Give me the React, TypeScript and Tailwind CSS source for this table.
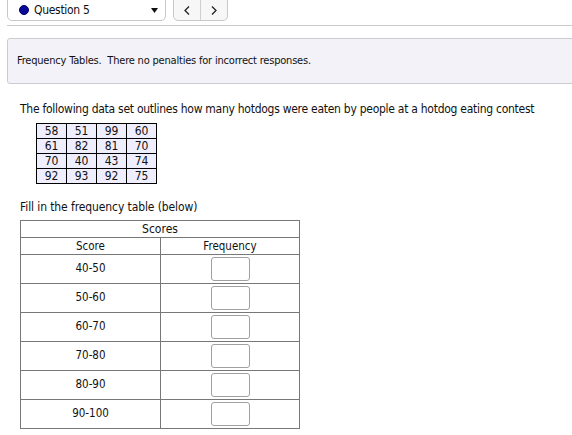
import React from "react";

const data = [
  [58, 51, 99, 60],
  [61, 82, 81, 70],
  [70, 40, 43, 74],
  [92, 93, 92, 75],
];
const ranges = ["40-50", "50-60", "60-70", "70-80", "80-90", "90-100"];

export default function App() {
  return (
    <div
      className="w-[572px] h-[435px] overflow-hidden bg-white text-[#222]"
      style={{ fontFamily: '"DejaVu Sans Condensed", "Liberation Sans", Arial, sans-serif' }}
    >
      {/* top bar */}
      <div className="flex items-start h-[22px]">
        <div className="ml-[7px] w-[159px] h-[22px] -mt-px border border-[#c8c8c8] rounded-b-[5px] flex items-center pl-[11px] pr-[7px]">
          <span className="w-[10px] h-[10px] rounded-full bg-[#0a0a9a] border border-[#000060]" />
          <span className="ml-[5px] text-[12px] tracking-[-0.3px] leading-none text-[#111]">Question 5</span>
          <svg className="ml-auto" width="7" height="5" viewBox="0 0 7 5">
            <path d="M0 0 L7 0 L3.5 5 Z" fill="#111" />
          </svg>
        </div>
        <div className="ml-[7px] w-[55px] h-[22px] -mt-px border border-[#c8c8c8] rounded-b-[5px] flex bg-[#f7f7f7]">
          <div className="w-[27px] h-full flex items-center justify-center border-r border-[#d0d0d0]">
            <svg width="6" height="9" viewBox="0 0 6 9">
              <path d="M5 0.5 L1 4.5 L5 8.5" fill="none" stroke="#222" strokeWidth="1.3" />
            </svg>
          </div>
          <div className="flex-1 h-full flex items-center justify-center">
            <svg width="6" height="9" viewBox="0 0 6 9">
              <path d="M1 0.5 L5 4.5 L1 8.5" fill="none" stroke="#222" strokeWidth="1.3" />
            </svg>
          </div>
        </div>
      </div>
      <div className="ml-[7px] mt-[3px] border-t border-[#cccccc]" />

      {/* info box */}
      <div className="ml-[7px] mr-[-10px] mt-[12px] h-[46px] border border-[#cccccc] rounded-[3px] bg-[#f2f2f8] flex items-center pl-[9px]">
        <span className="text-[11px] tracking-[-0.2px] text-[#111]">
          Frequency Tables.&nbsp; There no penalties for incorrect responses.
        </span>
      </div>

      {/* question */}
      <div className="ml-[20px] mt-[17px] text-[12px] tracking-[-0.27px] leading-[16px] text-[#111] whitespace-nowrap">
        The following data set outlines how many hotdogs were eaten by people at a hotdog eating contest
      </div>
      <table className="ml-[36px] mt-[6px] border-collapse border border-black bg-[#eeeeff] text-[12px] text-[#111]">
        <tbody>
          {data.map((row, i) => (
            <tr key={i}>
              {row.map((v, j) => (
                <td key={j} className="border border-black w-[30px] h-[15px] leading-[13px] p-0 text-center">
                  {v}
                </td>
              ))}
            </tr>
          ))}
        </tbody>
      </table>

      <div className="ml-[20px] mt-[15px] text-[12px] tracking-[-0.1px] leading-[16px] text-[#111]">
        Fill in the frequency table (below)
      </div>
      <table className="ml-[20px] mt-[5px] w-[280px] border-collapse border border-[#333] text-[11.5px] text-[#111]">
        <tbody>
          <tr>
            <td colSpan={2} className="border border-[#777] h-[17px] p-0 text-center text-[12px] leading-[15px]">
              Scores
            </td>
          </tr>
          <tr>
            <td className="border border-[#777] w-[140px] h-[17px] p-0 text-center leading-[15px]">Score</td>
            <td className="border border-[#777] h-[17px] p-0 text-center leading-[15px]">Frequency</td>
          </tr>
          {ranges.map((r) => (
            <tr key={r}>
              <td className="border border-[#777] h-[29px] p-0 text-center">{r}</td>
              <td className="border border-[#777] h-[29px] p-0">
                <div className="flex justify-center">
                  <input
                    type="text"
                    className="w-[39px] h-[24px] border border-[#a0a0a0] rounded-[3px] bg-white outline-none"
                  />
                </div>
              </td>
            </tr>
          ))}
        </tbody>
      </table>
    </div>
  );
}
